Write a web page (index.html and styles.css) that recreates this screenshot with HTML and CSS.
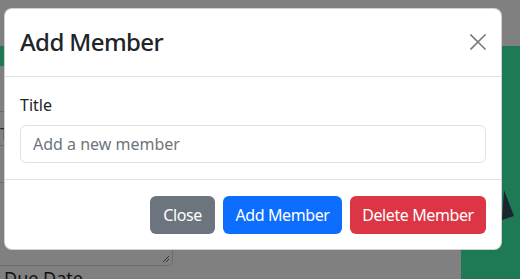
FILE: index.html
```html
<!DOCTYPE html>
<html lang="en">
<head>
<meta charset="utf-8">
<title>Add Member</title>
<link rel="stylesheet" href="styles.css">
</head>
<body>
<div class="page">
  <div class="top-gap"></div>
  <div class="navband"></div>
  <div class="content">
    <div class="main">
      <div class="row-line"></div>
      <div class="row-field"><span class="row-letter">T</span></div>
      <div class="textarea-box">
        <svg class="grip" width="8" height="8" viewBox="0 0 8 8"><path d="M7 1 L1 7 M7 4 L4 7" stroke="#333" stroke-width="1"/></svg>
      </div>
      <div class="due">Due Date</div>
    </div>
    <div class="side">
      <svg class="side-shape" width="12" height="30" viewBox="0 0 12 30"><path d="M2 0 L12 26 L0 30 Z" fill="#1b2530"/></svg>
    </div>
  </div>
</div>

<div class="modal" role="dialog" aria-labelledby="modalTitle">
  <div class="modal-header">
    <h4 class="modal-title" id="modalTitle">Add Member</h4>
    <button class="btn-close" aria-label="Close">
      <svg width="16" height="16" viewBox="0 0 16 16"><path d="M1 1 L15 15 M15 1 L1 15" stroke="#7a7a7a" stroke-width="1.6" stroke-linecap="square"/></svg>
    </button>
  </div>
  <div class="modal-body">
    <label class="form-label" for="title">Title</label>
    <input class="form-control" id="title" type="text" placeholder="Add a new member">
  </div>
  <div class="modal-footer">
    <button class="btn btn-secondary">Close</button>
    <button class="btn btn-primary">Add Member</button>
    <button class="btn btn-danger">Delete Member</button>
  </div>
</div>
</body>
</html>
```
FILE: styles.css
```css
* { box-sizing: border-box; }
html, body { margin: 0; padding: 0; }
body {
  width: 520px;
  height: 279px;
  overflow: hidden;
  background: #808080;
  font-family: "Segoe UI", "Noto Sans", "Open Sans", sans-serif;
  color: #212529;
  position: relative;
}
.page { width: 520px; height: 279px; display: flex; flex-direction: column; }
.top-gap { height: 46px; flex: none; }
.navband { height: 20px; background: #1e7a55; flex: none; }
.content { flex: 1; display: flex; min-height: 0; }
.main { flex: 1; display: flex; flex-direction: column; }
.side { width: 59px; background: #1e7a55; position: relative; }
.side-shape { position: absolute; left: 41px; top: 124px; }
.row-line { height: 46px; flex: none; border-bottom: 1px solid #6a6a6a; }
.row-field {
  height: 34px;
  flex: none;
  border-bottom: 1px solid #6a6a6a;
  display: flex; align-items: flex-end;
}
.row-letter { font-size: 16px; color: #0d2a4a; line-height: 22px; margin-left: 0; }
.textarea-box {
  flex: none;
  margin-top: 36px;
  width: 183px;
  margin-left: -10px;
  height: 84px;
  border: 1px solid #6e6e6e;
  border-radius: 4px;
  position: relative;
}
.grip { position: absolute; right: 2px; bottom: 2px; }
.due { flex: none; font-size: 18px; line-height: 22px; margin: 1px 0 0 4px; color: #111; }

.modal {
  position: absolute;
  left: 4px;
  top: 8px;
  width: 498px;
  background: #fff;
  border: 1px solid rgba(0,0,0,0.18);
  border-radius: 8px;
  display: flex;
  flex-direction: column;
}
.modal-header {
  padding: 15px 15px 16px 15px;
  display: flex;
  align-items: center;
  justify-content: space-between;
  border-bottom: 1px solid #dee2e6;
}
.modal-title {
  margin: 0;
  font-size: 24px;
  line-height: 36px;
  font-weight: 500;
  letter-spacing: -0.6px;
}
.btn-close {
  border: 0; background: none; padding: 0;
  width: 16px; height: 16px;
  display: flex;
}
.modal-body { padding: 16px 15px; display: flex; flex-direction: column; }
.form-label { font-size: 16px; line-height: 24px; margin-bottom: 8px; }
.form-control {
  height: 38px;
  border: 1px solid #dee2e6;
  border-radius: 6px;
  padding: 6px 12px;
  font-family: inherit;
  font-size: 16px;
  color: #212529;
}
.form-control::placeholder { color: #6c757d; }
.modal-footer {
  border-top: 1px solid #dee2e6;
  padding: 12px 15px 11px 15px;
  display: flex;
  justify-content: flex-end;
  gap: 8px;
}
.btn {
  flex: none;
  height: 38px;
  border: 0;
  border-radius: 6px;
  padding: 0;
  font-family: inherit;
  font-size: 16px;
  color: #fff;
  margin: 4px 0;
  letter-spacing: -0.4px;
  white-space: nowrap;
  text-align: center;
}
.btn-secondary { background: #6c757d; width: 65px; }
.btn-primary { background: #0d6efd; width: 119px; }
.btn-danger { background: #dc3545; width: 136px; }
```
